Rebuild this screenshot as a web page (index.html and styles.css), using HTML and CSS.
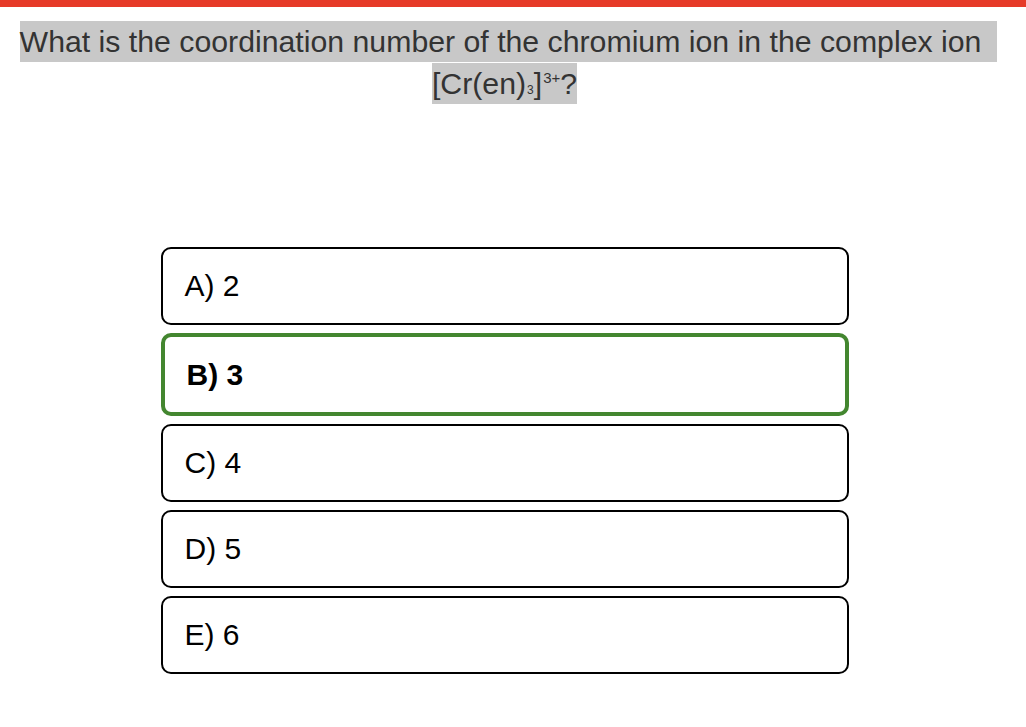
FILE: index.html
```html
<!DOCTYPE html>
<html>
<head>
<meta charset="utf-8">
<link rel="stylesheet" href="styles.css">
</head>
<body>
<div class="topbar"></div>
<main class="page">
  <div class="question"><span class="qtext first">What is the coordination number of the chromium ion in the complex ion</span><br><span class="qtext">[Cr(en)<sub>3</sub>]<sup>3+</sup>?</span></div>
  <div class="options">
    <div class="option">A) 2</div>
    <div class="option selected">B) 3</div>
    <div class="option">C) 4</div>
    <div class="option">D) 5</div>
    <div class="option">E) 6</div>
  </div>
</main>
</body>
</html>
```
FILE: styles.css
```css
html, body {
  margin: 0;
  padding: 0;
  background: #ffffff;
  font-family: "Liberation Sans", Arial, sans-serif;
}
.topbar {
  height: 7px;
  background: #e63a28;
}
.page {
  padding: 14px 25px 0 8px;
}
.question {
  text-align: center;
  font-size: 30.25px;
  line-height: 42px;
  color: #333333;
}
.qtext {
  background: #c8c8c8;
  padding: 4px 0;
}
.qtext.first {
  padding-right: 16px;
  margin-right: -8px;
}
.qtext sub, .qtext sup {
  line-height: 0;
}
.qtext sub {
  font-size: 12px;
  vertical-align: baseline;
  margin-left: 1px;
}
.qtext sup {
  font-size: 15px;
  vertical-align: 11px;
  margin-left: 1px;
}
.options {
  width: 688px;
  margin: 142px auto 0;
  display: flex;
  flex-direction: column;
  gap: 8px;
}
.option {
  height: 78px;
  box-sizing: border-box;
  border: 2px solid #000000;
  border-radius: 10px;
  padding: 0 22px;
  display: flex;
  align-items: center;
  font-size: 30px;
  color: #000000;
}
.option.selected {
  height: 83px;
  border: 4px solid #43862f;
  font-weight: bold;
  padding-left: 22px;
}
```
